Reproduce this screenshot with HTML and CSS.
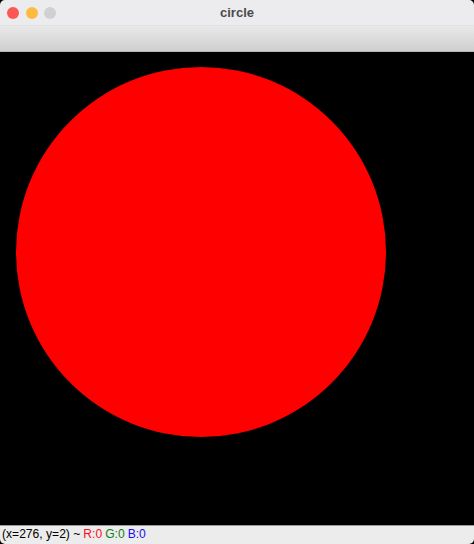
FILE: index.html
```html
<!DOCTYPE html>
<html lang="en">
<head>
    <meta charset="UTF-8">
    <title>circle</title>
    <link rel="stylesheet" href="styles.css">
</head>
<body>

<div class="window">
    <div class="titlebar">
        <div class="lights">
            <span class="light red"></span>
            <span class="light yellow"></span>
            <span class="light grey"></span>
        </div>
        <div class="title">circle</div>
    </div>
    <div class="toolbar"></div>
    <div class="canvas">
        <div class="circle"></div>
    </div>
    <div class="status">
        <span>(x=276, y=2) ~</span>
        <span class="r">R:0</span>
        <span class="g">G:0</span>
        <span class="b">B:0</span>
    </div>
</div>

</body>
</html>
```

FILE: styles.css
```css
html, body {
    margin: 0;
    padding: 0;
    background-color: #000;
}
.window {
    width: 474px;
    height: 544px;
    display: flex;
    flex-direction: column;
    font-family: "Liberation Sans", Arial, sans-serif;
    overflow: hidden;
    border-radius: 5px;
}
.titlebar {
    height: 25px;
    flex: none;
    display: flex;
    align-items: center;
    justify-content: center;
    position: relative;
    background-color: #ececee;
    border-bottom: 1px solid #e2e2e2;
}
.lights {
    position: absolute;
    left: 7px;
    top: 7px;
    display: flex;
    gap: 6.7px;
}
.light {
    width: 12px;
    height: 12px;
    border-radius: 50%;
}
.red { background-color: #fc5753; }
.yellow { background-color: #fdbc40; }
.grey { background-color: #cfd0d2; }
.title {
    font-size: 13px;
    font-weight: bold;
    color: #4a4a4c;
}
.toolbar {
    height: 25px;
    flex: none;
    background: linear-gradient(#e9e9e9, #cfcfcf);
    border-bottom: 1px solid #b5b5b5;
}
.canvas {
    flex: 1;
    background-color: #000;
    padding: 15px 0 0 16px;
}
.circle {
    width: 370px;
    height: 370px;
    border-radius: 50%;
    background-color: #fe0000;
}
.status {
    height: 19px;
    flex: none;
    display: flex;
    align-items: center;
    gap: 3px;
    padding: 0 0 3px 2px;
    box-sizing: border-box;
    background-color: #ececec;
    border-top: 1px solid #9a9a9a;
    font-size: 12.1px;
    color: #000;
}
.r { color: #fb0d1b; }
.g { color: #0f7f12; }
.b { color: #1a0df0; }
```
